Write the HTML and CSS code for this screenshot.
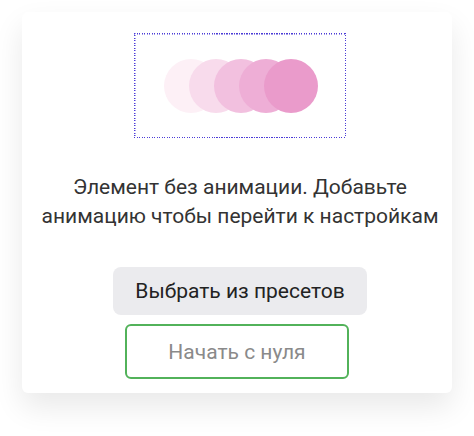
FILE: index.html
```html
<!DOCTYPE html>
<html lang="ru">
<head>
<meta charset="utf-8">
<link rel="stylesheet" href="styles.css">
</head>
<body>
<div class="card">
  <div class="preview">
    <div class="dots">
      <span class="dot d1"></span>
      <span class="dot d2"></span>
      <span class="dot d3"></span>
      <span class="dot d4"></span>
      <span class="dot d5"></span>
    </div>
  </div>
  <p class="msg">Элемент без анимации. Добавьте<br>анимацию чтобы перейти к настройкам</p>
  <button class="btn btn-preset">Выбрать из пресетов</button>
  <button class="btn btn-scratch">Начать с нуля</button>
</div>
</body>
</html>
```
FILE: styles.css
```css
html, body {
  margin: 0;
  padding: 0;
  background: #ffffff;
}
body {
  font-family: Roboto, "Noto Sans", sans-serif;
  width: 474px;
  height: 436px;
  overflow: hidden;
}
.card {
  margin: 12px 22px 0 22px;
  height: 381px;
  background: #fff;
  border-radius: 6px;
  box-shadow: 0 14px 30px rgba(0, 0, 0, 0.09);
  display: flex;
  flex-direction: column;
  align-items: center;
  padding-top: 21px;
  box-sizing: border-box;
}
.preview {
  width: 212px;
  height: 105px;
  box-sizing: border-box;
  background-image:
    repeating-linear-gradient(90deg, #4c3cd6 0 1px, transparent 1px 2.5px),
    repeating-linear-gradient(90deg, #4c3cd6 0 1px, transparent 1px 2.5px),
    repeating-linear-gradient(180deg, #4c3cd6 0 1px, transparent 1px 2.5px),
    repeating-linear-gradient(180deg, #4c3cd6 0 1px, transparent 1px 2.5px);
  background-size: 100% 1.5px, 100% 1.5px, 1.5px 100%, 1.5px 100%;
  background-position: 0 0, 0 100%, 0 0, 100% 0;
  background-repeat: no-repeat;
  display: flex;
  align-items: center;
  justify-content: center;
  margin-left: 6px;
}
.dots {
  display: flex;
  margin-left: 2px;
}
.dot {
  width: 54px;
  height: 54px;
  border-radius: 50%;
  margin-left: -29px;
}
.dot:first-child { margin-left: 0; }
.d1 { background: #fdf0f6; }
.d2 { background: #f8dbec; }
.d3 { background: #f2c0df; }
.d4 { background: #eeaed6; }
.d5 { background: #ea9bcb; }
.msg {
  margin: 35px 0 0 6px;
  font-size: 21px;
  line-height: 29px;
  color: #333333;
  text-align: center;
  white-space: nowrap;
}
.btn {
  font-family: Roboto, "Noto Sans", sans-serif;
  font-size: 21px;
  box-sizing: border-box;
  cursor: pointer;
}
.btn-preset {
  margin-top: 36px;
  width: 254px;
  height: 48px;
  border: none;
  border-radius: 8px;
  background: #ebebee;
  color: #222222;
  margin-left: 6px;
}
.btn-scratch {
  margin-top: 9px;
  width: 224px;
  height: 55px;
  border: 2px solid #52b25a;
  border-radius: 6px;
  background: #fff;
  color: #8a8a8a;
}
```
